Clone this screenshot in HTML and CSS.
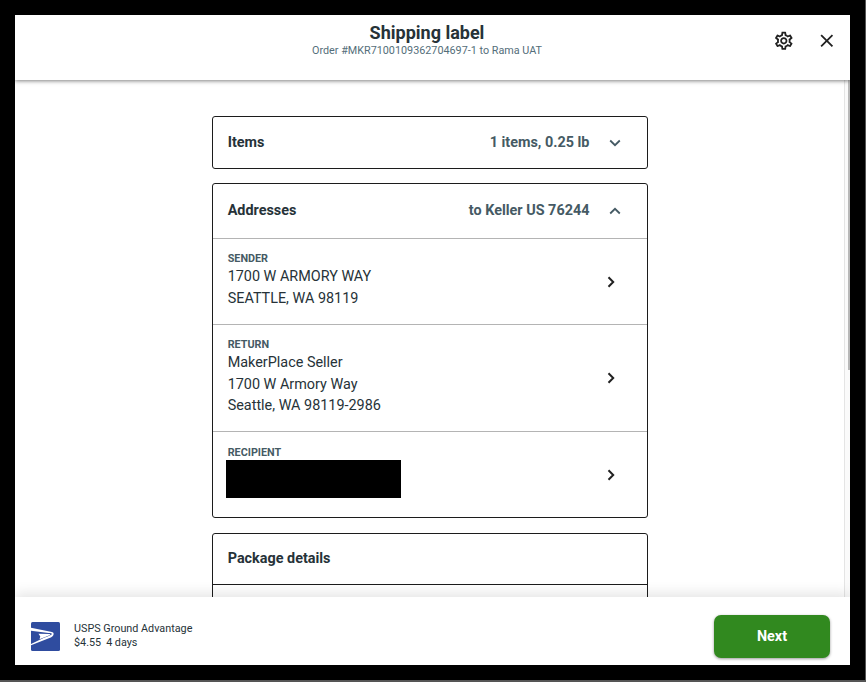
FILE: index.html
```
<!DOCTYPE html>
<html lang="en">
<head>
  <meta charset="UTF-8">
  <meta name="viewport" content="width=device-width, initial-scale=1.0">
  <title>Shipping label</title>
  <link rel="stylesheet" href="styles.css">
</head>
<body>
  <div class="dialog">
    <header class="header">
      <div class="header-text">
        <h1>Shipping label</h1>
        <p>Order #MKR7100109362704697-1 to Rama UAT</p>
      </div>
      <div class="header-actions">
        <button class="icon-button" aria-label="Settings">
          <svg width="21.600" height="21.600" viewBox="0 0 24 24" fill="currentColor"><path d="M19.43 12.98c.04-.32.07-.64.07-.98s-.03-.66-.07-.98l2.11-1.65c.19-.15.24-.42.12-.64l-2-3.46a.5.5 0 0 0-.61-.22l-2.49 1c-.52-.4-1.08-.73-1.69-.98l-.38-2.65A.488.488 0 0 0 14 2h-4c-.25 0-.46.18-.49.42l-.38 2.65c-.61.25-1.17.59-1.69.98l-2.49-1a.5.5 0 0 0-.61.22l-2 3.46c-.13.22-.07.49.12.64l2.11 1.65c-.04.32-.07.65-.07.98s.03.66.07.98l-2.11 1.65c-.19.15-.24.42-.12.64l2 3.46c.12.22.39.3.61.22l2.49-1c.52.4 1.08.73 1.69.98l.38 2.65c.03.24.24.42.49.42h4c.25 0 .46-.18.49-.42l.38-2.65c.61-.25 1.17-.59 1.69-.98l2.49 1c.23.09.49 0 .61-.22l2-3.46c.12-.22.07-.49-.12-.64zm-1.98-1.71c.04.31.05.52.05.73s-.02.43-.05.73l-.14 1.13.89.7 1.08.84-.7 1.21-1.27-.51-1.04-.42-.9.68c-.43.32-.84.56-1.25.73l-1.06.43-.16 1.13-.2 1.35h-1.4l-.19-1.35-.16-1.13-1.06-.43c-.43-.18-.83-.41-1.23-.71l-.91-.7-1.06.43-1.27.51-.7-1.21 1.08-.84.89-.7-.14-1.13c-.03-.31-.05-.54-.05-.74s.02-.43.05-.73l.14-1.13-.89-.7-1.08-.84.7-1.21 1.27.51 1.04.42.9-.68c.43-.32.84-.56 1.25-.73l1.06-.43.16-1.13.2-1.35h1.39l.19 1.35.16 1.13 1.06.43c.43.18.83.41 1.23.71l.91.7 1.06-.43 1.27-.51.7 1.21-1.07.85-.89.7zM12 8c-2.210 0-4 1.790-4 4s1.790 4 4 4 4-1.790 4-4-1.790-4-4-4m0 6c-1.100 0-2-.9-2-2s.9-2 2-2 2 .9 2 2-.9 2-2 2"/></svg>
        </button>
        <button class="icon-button" aria-label="Close">
          <svg width="21.600" height="21.600" viewBox="0 0 24 24" fill="currentColor"><path d="M19 6.410 17.590 5 12 10.590 6.410 5 5 6.410 10.590 12 5 17.590 6.410 19 12 13.410 17.590 19 19 17.590 13.410 12z"/></svg>
        </button>
      </div>
    </header>

    <main class="content">
      <div class="cards">
        <section class="card">
          <div class="card-header card-items">
            <h2>Items</h2>
            <span class="summary">1 items, 0.25 lb</span>
            <svg class="toggle" viewBox="0 0 12 8"><path d="M1.200 1.500 6 6.200 10.800 1.500"/></svg>
          </div>
        </section>

        <section class="card">
          <div class="card-header card-addresses">
            <h2>Addresses</h2>
            <span class="summary">to Keller US 76244</span>
            <svg class="toggle" viewBox="0 0 12 8"><path d="M1.200 6.500 6 1.800 10.800 6.500"/></svg>
          </div>
          <div class="address">
            <div class="address-text">
              <h3>Sender</h3>
              <p>1700 W ARMORY WAY<br>SEATTLE, WA 98119</p>
            </div>
            <svg class="arrow" viewBox="0 0 8 12"><path d="M1.500 1.300 6.200 6 1.500 10.700"/></svg>
          </div>
          <div class="address">
            <div class="address-text">
              <h3>Return</h3>
              <p>MakerPlace Seller<br>1700 W Armory Way<br>Seattle, WA 98119-2986</p>
            </div>
            <svg class="arrow" viewBox="0 0 8 12"><path d="M1.500 1.300 6.200 6 1.500 10.700"/></svg>
          </div>
          <div class="address address-recipient">
            <div class="address-text">
              <h3>Recipient</h3>
              <div class="redacted"></div>
            </div>
            <svg class="arrow" viewBox="0 0 8 12"><path d="M1.500 1.300 6.200 6 1.500 10.700"/></svg>
          </div>
        </section>

        <section class="card card-package">
          <div class="card-header">
            <h2>Package details</h2>
          </div>
        </section>
      </div>
      <div class="scrollbar">
        <div class="scrollbar-thumb"></div>
      </div>
    </main>

    <footer class="footer">
      <svg class="carrier-logo" viewBox="0 0 29 29">
        <rect width="29" height="29" rx="1.500" fill="#2f4c9f"/>
        <path d="M0 5.700 18.500 9.400C22 10 23.200 10.500 22.400 13 21.800 14.600 20.500 15.200 18.500 16L0 23.300V22L13 15.800C17 14.200 20.500 13.300 20.800 12 21 11 19.500 11 17.500 11L0 8.800Z" fill="#fff"/>
        <path d="M7.500 11.800 18.500 12C20 12.100 19.500 12.800 18.500 13.200L8.500 17.200 9.300 14.500Z" fill="#fff"/>
      </svg>
      <div class="carrier">
        <div>USPS Ground Advantage</div>
        <div><span class="price">$4.55</span><span>4 days</span></div>
      </div>
      <button class="next-button">Next</button>
    </footer>
  </div>
</body>
</html>
```

FILE: styles.css
```
* {
  box-sizing: border-box;
}

body {
  margin: 0;
  height: 682px;
  padding: 15px;
  background-color: #000;
  border-right: 1px solid #555;
  border-bottom: 2px solid #555;
  font-family: Roboto, sans-serif;
  color: #263238;
  overflow: hidden;
}

h1, h2, h3, p {
  margin: 0;
}

button {
  font-family: inherit;
  border: none;
  cursor: pointer;
}

.dialog {
  display: flex;
  flex-direction: column;
  height: 650px;
  background-color: #fff;
}

/* Header */
.header {
  display: grid;
  grid-template-columns: 1fr auto 1fr;
  flex: none;
  height: 65px;
  padding: 0 12px;
  background-color: #fff;
  box-shadow: 0 1px 4px rgba(0, 0, 0, 0.5);
  z-index: 1;
}

.header-text {
  grid-column: 2;
  padding-top: 7px;
  margin-right: 11px;
  text-align: center;
}

.header h1 {
  font-size: 18px;
  font-weight: bold;
  line-height: 22px;
}

.header p {
  font-size: 10.800px;
  line-height: 13px;
  color: #546e7a;
}

.header-actions {
  display: flex;
  justify-content: flex-end;
  align-items: flex-start;
  gap: 21px;
  padding-top: 15px;
}

.icon-button {
  padding: 0;
  width: 22px;
  height: 22px;
  background: none;
  color: #212121;
}

.icon-button svg {
  display: block;
}

/* Content */
.content {
  flex: 1;
  display: flex;
  min-height: 0;
  overflow: hidden;
}

.cards {
  flex: 1;
  display: flex;
  flex-direction: column;
  align-items: center;
  padding-top: 36px;
}

.card {
  flex: none;
  width: 436px;
  margin-left: 1px;
  margin-bottom: 14px;
  border: 1px solid #1c1c1c;
  border-radius: 3px;
}

.card + .card {
  margin-bottom: 15px;
}

.card-header {
  display: flex;
  align-items: center;
  height: 51px;
  padding: 0 26px 0 14.700px;
}

.card-addresses {
  height: 54px;
}

.card h2 {
  flex: 1;
  font-size: 14.400px;
  font-weight: bold;
  line-height: 20px;
}

.summary {
  font-size: 14.400px;
  font-weight: bold;
  line-height: 20px;
  color: #455a64;
}

.toggle {
  width: 12px;
  height: 8px;
  margin-left: 19.600px;
  margin-top: 1px;
  fill: none;
  stroke: #455a64;
  stroke-width: 1.800;
}

.card-addresses .toggle {
  margin-top: 0;
}

.address {
  display: flex;
  align-items: center;
  height: 86px;
  padding: 0 32px 0 14.700px;
  border-top: 1px solid #b4b4b4;
}

.address:nth-of-type(3) {
  height: 107px;
}

.address-text {
  flex: 1;
  align-self: flex-start;
  padding-top: 13px;
}

.address h3 {
  font-size: 10.800px;
  font-weight: bold;
  line-height: 13px;
  text-transform: uppercase;
  color: #455a64;
}

.address p {
  margin-top: 1px;
  font-size: 14.400px;
  line-height: 21.600px;
}

.address-recipient .address-text {
  padding-top: 14px;
}

.redacted {
  width: 175px;
  height: 38px;
  margin: 1px 0 0 -1.700px;
  background-color: #000;
}

.arrow {
  width: 8px;
  height: 12px;
  fill: none;
  stroke: #212121;
  stroke-width: 2;
}

.card-package {
  height: 90px;
}

.card-package .card-header {
  border-bottom: 1px solid #1c1c1c;
}

.scrollbar {
  display: flex;
  justify-content: flex-end;
  width: 6px;
  background-color: #fafafa;
  border-left: 1px solid #e4e4e4;
}

.scrollbar-thumb {
  width: 2px;
  height: 290px;
  background-color: #b8b8b8;
}

/* Footer */
.footer {
  display: flex;
  align-items: center;
  flex: none;
  height: 68px;
  padding: 0 20px 0 16px;
  background-color: #fff;
  box-shadow: 0 -4px 12px rgba(0, 0, 0, 0.1);
  z-index: 1;
}

.carrier-logo {
  width: 29px;
  height: 29px;
  margin-top: 10px;
}

.carrier {
  flex: 1;
  margin-left: 14px;
  margin-top: 9px;
  font-size: 10.800px;
  line-height: 14px;
}

.price {
  margin-right: 5px;
}

.next-button {
  width: 116px;
  height: 43px;
  margin-top: 10px;
  border-radius: 7px;
  background-color: #31891f;
  color: #fff;
  font-size: 14.400px;
  font-weight: bold;
  box-shadow: 0 1px 3px rgba(0, 0, 0, 0.4);
}
```
